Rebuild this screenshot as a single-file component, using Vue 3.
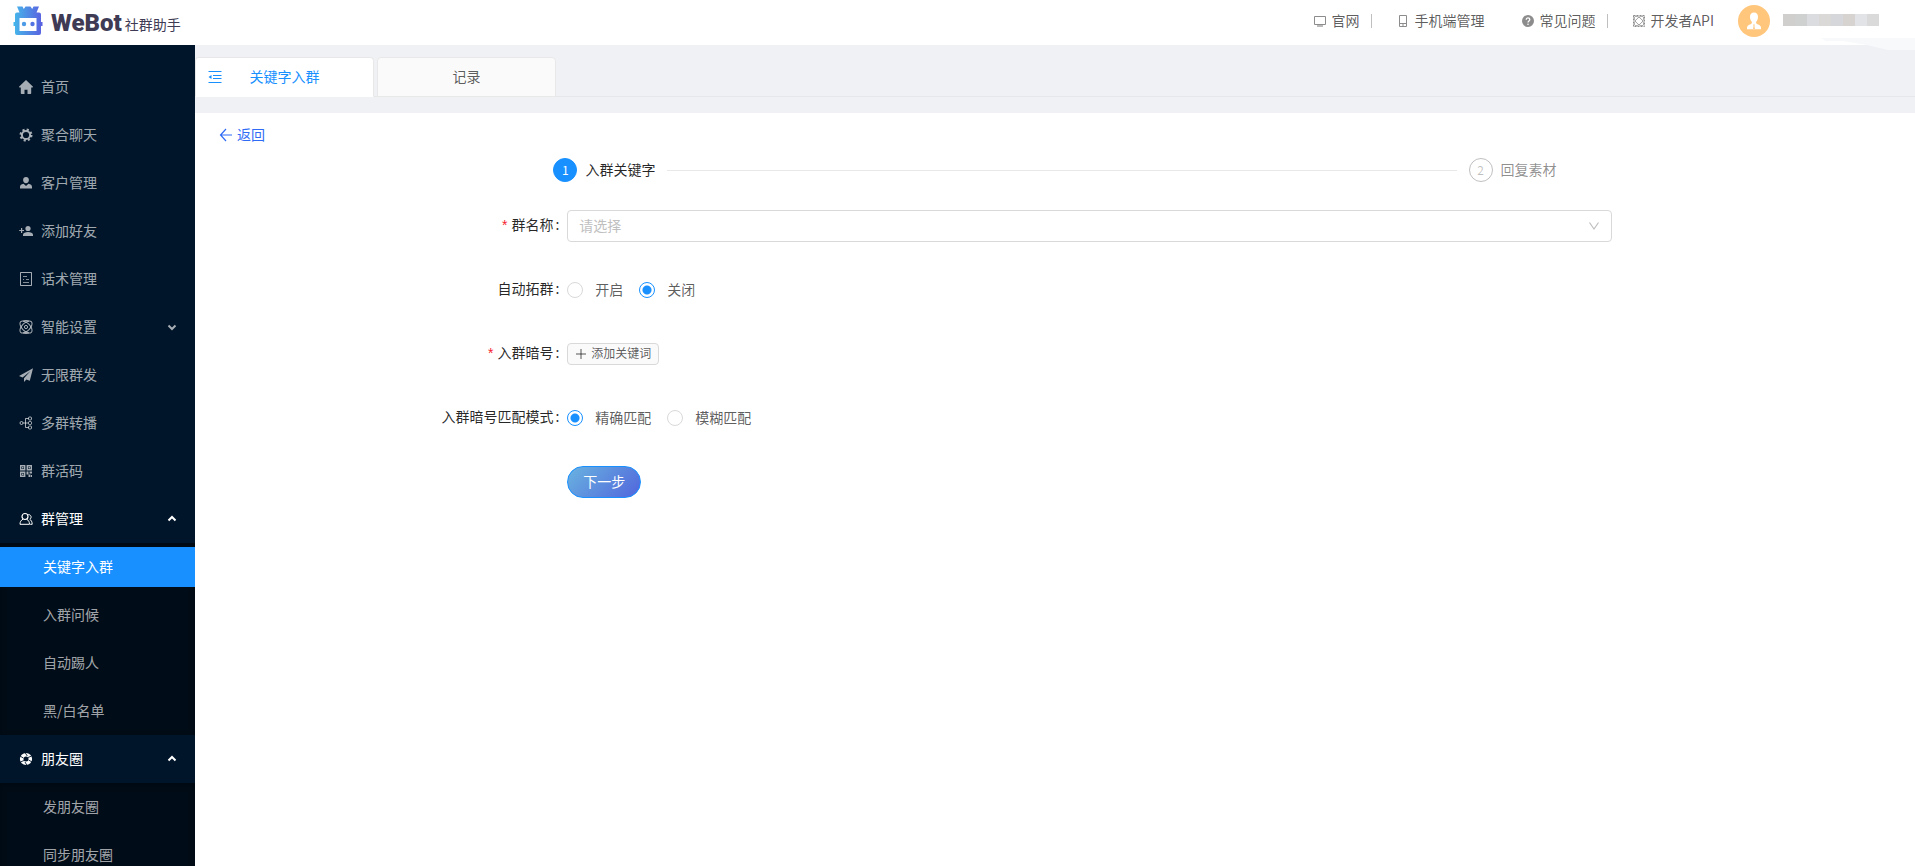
<template>
    <div class="layout">
        <header class="header">
            <a class="logo" href="#">
                <svg class="logo-icon" viewBox="0 0 30 30" aria-hidden="true">
                    <defs>
                        <linearGradient id="bot" x1="0" y1="0" x2="1" y2="0">
                            <stop offset="0" stop-color="#45b8ea" />
                            <stop offset="1" stop-color="#5a5fe0" />
                        </linearGradient>
                    </defs>
                    <path
                        fill="url(#bot)"
                        fill-rule="evenodd"
                        d="M4 .5h5.500l1.300 2.500L12.500.5h5l1.700 2.500L20.500.5H26L23.500 6.500H26a2 2 0 0 1 2 2V16h1.500v4H28v7a2 2 0 0 1-2 2H4a2 2 0 0 1-2-2v-7H.5v-4H2V8.500a2 2 0 0 1 2-2h2.500zM6.500 12v13h17V12z"
                    />
                    <circle cx="11" cy="18" r="2.200" fill="#4d9be6" />
                    <circle cx="19.500" cy="18" r="2.200" fill="#5374e3" />
                </svg>
                <span class="logo-name">WeBot</span>
                <span class="logo-text">社群助手</span>
            </a>
            <nav class="links">
                <a v-for="link in links" :key="link.text" class="link" :class="{ divided: link.divided }" href="#">
                    <svg class="icon-small" viewBox="0 0 12 12" aria-hidden="true" v-html="icons[link.icon]"></svg>
                    <span class="text">{{ link.text }}</span>
                </a>
            </nav>
            <div class="user">
                <svg class="avatar" viewBox="0 0 32 32" aria-hidden="true">
                    <circle cx="16" cy="16" r="16" fill="#ffc67c" />
                    <path
                        fill="#fff"
                        d="M16 7.500c2.600 0 4 1.800 4 4.400 0 2.200-.8 3.800-1.800 4.900-.5 1.300.2 2 1.200 2.400 2 .7 3.600 1.300 3.600 3.600v1.400H9v-1.400c0-2.300 1.600-2.900 3.600-3.600 1-.4 1.700-1.100 1.200-2.400-1-1.100-1.800-2.700-1.800-4.900 0-2.600 1.400-4.400 4-4.400z"
                    />
                    <path fill="#ffc67c" d="M15.200 19.500h1.600l-.4 1.500.5 3h-1.800l.5-3z" />
                </svg>
                <div class="user-name">
                    <i v-for="(color, i) in blocks" :key="i" :style="{ background: color }"></i>
                </div>
            </div>
            <svg class="corner" viewBox="0 0 94 12" aria-hidden="true">
                <path fill="#f8f9fb" d="M0 0h94v12H67L46 7 22 3H5z" />
            </svg>
        </header>

        <div class="body">
            <aside class="sider">
                <ul class="menu">
                    <li v-for="item in menu" :key="item.text">
                        <a class="menu-item" :class="{ open: item.children }" href="#">
                            <svg class="icon" viewBox="0 0 14 14" aria-hidden="true" v-html="icons[item.icon]"></svg>
                            <span class="text">{{ item.text }}</span>
                            <svg
                                v-if="item.children || item.closed"
                                class="arrow"
                                :class="{ up: item.children }"
                                viewBox="0 0 10 10"
                                aria-hidden="true"
                            >
                                <path d="M1.500 3.500 5 7l3.500-3.500" fill="none" stroke="currentColor" stroke-width="2" />
                            </svg>
                        </a>
                        <ul v-if="item.children" class="submenu">
                            <li v-for="child in item.children" :key="child">
                                <a class="submenu-item" :class="{ active: child === current }" href="#">{{ child }}</a>
                            </li>
                        </ul>
                    </li>
                </ul>
            </aside>

            <main class="main">
                <div class="tabs" role="tablist">
                    <button
                        v-for="tab in tabs"
                        :key="tab"
                        class="tab"
                        :class="{ active: tab === activeTab }"
                        type="button"
                        role="tab"
                        :aria-selected="tab === activeTab"
                        @click="activeTab = tab"
                    >
                        <span class="tab-side">
                            <svg v-if="tab === tabs[0]" class="icon" viewBox="0 0 14 14" aria-hidden="true" v-html="icons.fold"></svg>
                        </span>
                        <span class="text">{{ tab }}</span>
                    </button>
                </div>

                <section class="content">
                    <a class="back" href="#">
                        <svg class="icon" viewBox="0 0 14 14" aria-hidden="true" v-html="icons.back"></svg>
                        <span class="text">返回</span>
                    </a>

                    <ol class="steps">
                        <li class="step active"><span class="step-num">1</span><span class="text">入群关键字</span></li>
                        <li class="step-line" role="presentation"></li>
                        <li class="step"><span class="step-num">2</span><span class="text">回复素材</span></li>
                    </ol>

                    <form class="form" @submit.prevent>
                        <div class="row">
                            <label class="label required" for="group">群名称</label>
                            <div class="control">
                                <div class="select">
                                    <select id="group" v-model="group">
                                        <option value="">请选择</option>
                                    </select>
                                    <svg class="select-arrow" viewBox="0 0 12 12" aria-hidden="true">
                                        <path d="M1.500 2.500 6 9l4.500-6.500" fill="none" stroke="currentColor" stroke-width="1.200" />
                                    </svg>
                                </div>
                            </div>
                        </div>
                        <div class="row" role="radiogroup" aria-labelledby="expand">
                            <span id="expand" class="label">自动拓群</span>
                            <div class="control">
                                <label class="radio">
                                    <input v-model="expand" type="radio" name="expand" value="on" />
                                    <span class="text">开启</span>
                                </label>
                                <label class="radio">
                                    <input v-model="expand" type="radio" name="expand" value="off" />
                                    <span class="text">关闭</span>
                                </label>
                            </div>
                        </div>
                        <div class="row">
                            <label class="label required" for="add">入群暗号</label>
                            <div class="control">
                                <button id="add" class="add" type="button">
                                    <svg class="icon-small" viewBox="0 0 12 12" aria-hidden="true">
                                        <path d="M6 1v10M1 6h10" stroke="currentColor" />
                                    </svg>
                                    <span class="text">添加关键词</span>
                                </button>
                            </div>
                        </div>
                        <div class="row" role="radiogroup" aria-labelledby="match">
                            <span id="match" class="label">入群暗号匹配模式</span>
                            <div class="control">
                                <label class="radio">
                                    <input v-model="match" type="radio" name="match" value="exact" />
                                    <span class="text">精确匹配</span>
                                </label>
                                <label class="radio">
                                    <input v-model="match" type="radio" name="match" value="fuzzy" />
                                    <span class="text">模糊匹配</span>
                                </label>
                            </div>
                        </div>
                        <div class="row">
                            <span></span>
                            <div class="control">
                                <button class="next" type="submit">下一步</button>
                            </div>
                        </div>
                    </form>
                </section>
            </main>
        </div>
    </div>
</template>

<script setup>
import { ref } from 'vue'

const current = '关键字入群'
const tabs = ['关键字入群', '记录']
const activeTab = ref('关键字入群')
const group = ref('')
const expand = ref('off')
const match = ref('exact')

const links = [
    { text: '官网', icon: 'screen', divided: true },
    { text: '手机端管理', icon: 'phone' },
    { text: '常见问题', icon: 'help', divided: true },
    { text: '开发者API', icon: 'api' },
]

const blocks = ['#d0cfce', '#cfd1d1', '#dadcdf', '#dad9d7', '#d6d7db', '#d6d3d1', '#e1e3e6', '#dadada']

const menu = [
    { text: '首页', icon: 'home' },
    { text: '聚合聊天', icon: 'gear' },
    { text: '客户管理', icon: 'user' },
    { text: '添加好友', icon: 'addUser' },
    { text: '话术管理', icon: 'doc' },
    { text: '智能设置', icon: 'atom', closed: true },
    { text: '无限群发', icon: 'plane' },
    { text: '多群转播', icon: 'tree' },
    { text: '群活码', icon: 'qr' },
    { text: '群管理', icon: 'group', children: ['关键字入群', '入群问候', '自动踢人', '黑/白名单'] },
    { text: '朋友圈', icon: 'shutter', children: ['发朋友圈', '同步朋友圈'] },
]

const line = 'fill="none" stroke="currentColor"'
const icons = {
    home: '<path d="M7 0 .2 6.600c-.3.4-.1.8.3.8h1.300v5.900c0 .4.3.7.7.7h3V9.800h3V14h3c.4 0 .7-.3.700-.7V7.400h1.300c.4 0 .6-.4.300-.8z" fill="currentColor"/>',
    gear: `<circle cx="7" cy="7" r="4.100" ${line} stroke-width="2"/><circle cx="7" cy="7" r="5.600" ${line} stroke-width="1.800" stroke-dasharray="2.200 2.200"/>`,
    user: '<path d="M7 1c1.800 0 2.900 1.300 2.900 3S8.700 7.300 7 7.300 4.100 5.700 4.100 4 5.200 1 7 1zM4.500 7.800 7 10l2.500-2.200c2.200.4 3.500 1.500 3.500 3.200v1.500H1V11c0-1.700 1.300-2.800 3.500-3.200z" fill="currentColor"/>',
    addUser: '<circle cx="9" cy="4.500" r="2.600" fill="currentColor"/><path d="M4 12v-1.200C4 8.900 6.500 8 9 8s5 .9 5 2.800V12zM2 4h1.200v1.900H5v1.200H3.200V9H2V7.100H.2V5.900H2z" fill="currentColor"/>',
    doc: `<path d="M1.500.5h11v13h-11z" ${line}/><path d="M4 4.500h4M4 7.500h1M7 7.500h3M4 10.500h6" ${line} stroke-opacity=".8"/>`,
    atom: `<ellipse cx="7" cy="7" rx="7.500" ry="4" transform="rotate(45 7 7)" ${line}/><ellipse cx="7" cy="7" rx="7.500" ry="4" transform="rotate(-45 7 7)" ${line}/><circle cx="7" cy="7" r="1.600" ${line}/><path d="M4 1.200Q7-.6 10 1.200M4 12.800q3 1.800 6 0" ${line}/>`,
    plane: '<path d="M14 .3 0 8l3.600 1.400L11.500 3 5 10.200V14l2.400-2.600 3.400 1.400z" fill="currentColor"/>',
    tree: `<circle cx="2.500" cy="7" r="1.500" ${line}/><path d="M4 7h5.500M9.500 2.500h-3v9h3" ${line}/><rect x="9.500" y="1" width="3" height="3" rx="1" ${line}/><rect x="9.500" y="5.500" width="3" height="3" rx="1" ${line}/><rect x="9.500" y="10" width="3" height="3" rx="1" ${line}/>`,
    qr: `<path d="M1.700 1.700h4v4h-4zM8.300 1.700h4v4h-4zM1.700 8.300h4v4h-4z" ${line} stroke-width="1.400"/><path d="M3 3h1.500v1.500H3zM9.500 3H11v1.500H9.500zM3 9.500h1.500V11H3zM7.500 7.500h2v3h-2zM10.500 7.500H13v2h-2.500zM9.500 10.500h2V13h-2zM12 11h1v2h-1z" fill="currentColor"/>`,
    group: `<circle cx="6" cy="4.500" r="3" ${line} stroke-width="1.200"/><path d="M4 7.200C2 8.200 1 9.800 1 12.300h9.500c0-2.500-1-4-2.800-5.100M9.300 2.500c3 .2 3.700 3.300 1.500 4.900 1.500.8 2.300 2.300 2.400 4.900h-2" ${line}/>`,
    shutter: `<circle cx="7" cy="7" r="4.300" ${line} stroke-width="3.600"/><path d="M6 .5 8.300 4M12.600 4 9 5.500M13 10 9.600 8M8 13.500 6 10M1.400 10 5 8.500M1 4l3.400 2" stroke="#001529" stroke-width=".9"/>`,
    fold: `<path d="M.5 1.500h13M5 5.500h8.500M5 8.500h8.500M.5 12.500h13" ${line}/><path d="M3.500 5v4L.5 7z" fill="currentColor"/>`,
    back: `<path d="M13 7H2M7 1 1.500 7 7 13" ${line} stroke-width="1.200"/>`,
    screen: `<path d="M.5 1.500h11v8H.5z" ${line}/><path d="M3 11h6" ${line} stroke-width="1.200"/>`,
    phone: `<path d="M2.500.5h7v11h-7zM2.500 8.500h7M5 10h2" ${line}/>`,
    help: '<circle cx="6" cy="6" r="6" fill="currentColor"/><path d="M4.200 4.800c0-2.600 3.600-2.300 3.600-.2C7.800 6 6 6 6 7.500" fill="none" stroke="#fff" stroke-width="1.300"/><circle cx="6" cy="9.200" r=".8" fill="#fff"/>',
    api: `<path d="M.5.5h11v11H.5z" ${line} stroke-dasharray="2 1"/><ellipse cx="6" cy="6" rx="6" ry="3" transform="rotate(45 6 6)" ${line} stroke-width=".8"/><ellipse cx="6" cy="6" rx="6" ry="3" transform="rotate(-45 6 6)" ${line} stroke-width=".8"/>`,
}
</script>

<style>
body {
    margin: 0;
}
</style>

<style scoped>
.layout {
    display: flex;
    flex-direction: column;
    height: 100vh;
    overflow: hidden;
    color: rgba(0, 0, 0, 0.65);
    font-family: "Noto Sans CJK SC", sans-serif;
    font-size: 14px;
    line-height: 22px;
}

.layout * {
    box-sizing: border-box;
}

a {
    color: inherit;
    text-decoration: none;
}

ul,
ol {
    margin: 0;
    padding: 0;
    list-style: none;
}

button,
select {
    font: inherit;
    cursor: pointer;
}

.icon {
    flex: none;
    width: 14px;
    height: 14px;
}

.icon-small {
    flex: none;
    width: 12px;
    height: 12px;
}

/* centres the glyphs on the icon beside them */
.text {
    padding-bottom: 2px;
}

/* header */
.header {
    position: relative;
    display: flex;
    flex: none;
    align-items: center;
    height: 45px;
    padding: 0 36px 3px 13px;
    background: #fff;
}

.logo {
    display: flex;
    align-items: center;
    margin-right: auto;
    color: #403b54;
}

.logo-icon {
    width: 30px;
    height: 30px;
    margin-right: 8px;
}

.logo-name {
    padding-top: 3px;
    margin-right: 3px;
    font-family: Roboto, sans-serif;
    font-size: 24px;
    font-weight: 900;
}

.logo-text {
    padding-top: 6px;
}

.links {
    display: flex;
    gap: 37px;
    margin-right: 24px;
}

.link {
    position: relative;
    display: flex;
    align-items: center;
    gap: 6px;
}

.link .icon-small {
    color: #8c8c8c;
}

.divided::after {
    content: "";
    position: absolute;
    right: -12px;
    width: 1px;
    height: 14px;
    background: #bfbfbf;
}

.user {
    display: flex;
    align-items: center;
    gap: 13px;
}

.avatar {
    width: 32px;
    height: 32px;
}

.user-name {
    display: flex;
    padding-bottom: 2px;
}

.user-name i {
    width: 12px;
    height: 12px;
}

.corner {
    position: absolute;
    top: 38px;
    right: 0;
    width: 94px;
    height: 12px;
}

/* sidebar */
.body {
    display: flex;
    flex: 1;
    min-height: 0;
}

.sider {
    flex: none;
    width: 195px;
    padding-top: 18px;
    overflow: hidden;
    background: #001529;
}

.menu {
    color: rgba(255, 255, 255, 0.65);
}

.menu-item {
    display: flex;
    align-items: center;
    gap: 8px;
    height: 48px;
    padding: 0 18px 0 19px;
}

.menu-item.open {
    color: #fff;
}

.arrow {
    width: 10px;
    height: 10px;
    margin-left: auto;
}

.arrow.up {
    transform: rotate(180deg);
}

.submenu {
    display: flow-root;
    background: #000c17;
    box-shadow: inset 0 2px 6px rgba(0, 0, 0, 0.3);
}

.submenu li {
    padding: 4px 0;
}

.submenu-item {
    display: block;
    padding: 0 0 2px 43px;
    line-height: 38px;
}

.submenu-item.active {
    color: #fff;
    background: #1890ff;
}

/* main */
.main {
    display: flex;
    flex: 1;
    flex-direction: column;
    min-width: 0;
    padding-top: 12px;
    background: #f0f1f5;
}

.tabs {
    display: flex;
    gap: 3px;
    margin-bottom: 16px;
    box-shadow: inset 0 -1px #e6e7e9;
}

.tab {
    display: grid;
    grid-template-columns: 1fr auto 1fr;
    align-items: center;
    width: 179px;
    height: 40px;
    padding: 0 12px;
    color: inherit;
    background: #fafafa;
    border: 1px solid #e8e8e8;
    border-radius: 4px 4px 0 0;
}

.tab-side {
    display: flex;
}

.tab.active {
    color: #1890ff;
    background: #fff;
    border-bottom-color: #fff;
}

.content {
    flex: 1;
    padding: 10px 24px;
    background: #fff;
}

.back {
    display: flex;
    align-items: center;
    gap: 4px;
    width: fit-content;
    color: #2f6bf5;
}

.steps {
    display: flex;
    align-items: center;
    gap: 12px;
    width: 60%;
    margin: 11px auto 22px;
}

.step {
    display: flex;
    align-items: center;
    gap: 8px;
    color: rgba(0, 0, 0, 0.45);
}

.step.active {
    color: rgba(0, 0, 0, 0.85);
}

.step-num {
    width: 24px;
    height: 24px;
    border: 1px solid rgba(0, 0, 0, 0.25);
    border-radius: 50%;
    color: rgba(0, 0, 0, 0.25);
    font-size: 12px;
    text-align: center;
}

.active .step-num {
    color: #fff;
    background: #1890ff;
    border-color: #1890ff;
}

.step-line {
    flex: 1;
    height: 1px;
    background: #e8e8e8;
}

/* form */
.form {
    display: flex;
    flex-direction: column;
    gap: 24px;
}

.row {
    display: grid;
    grid-template-columns: 5fr 15fr 4fr;
    align-items: center;
    height: 40px;
}

.label {
    padding-right: 8px;
    color: rgba(0, 0, 0, 0.85);
    text-align: right;
}

.label::after {
    content: ":";
    margin-left: 2px;
}

.required::before {
    content: "*";
    margin-right: 4px;
    color: #f5222d;
    font-family: "Liberation Sans", sans-serif;
}

.control {
    display: flex;
    align-items: center;
    padding-top: 4px;
}

.select {
    position: relative;
    flex: 1;
}

.select select {
    display: block;
    width: 100%;
    height: 32px;
    padding: 0 32px 2px 11px;
    color: #bfbfbf;
    background: #fff;
    border: 1px solid #d9d9d9;
    border-radius: 4px;
    appearance: none;
}

.select-arrow {
    position: absolute;
    top: 10px;
    right: 12px;
    width: 12px;
    height: 12px;
    color: #bfbfbf;
    pointer-events: none;
}

.radio {
    display: flex;
    align-items: center;
    gap: 12px;
    margin-right: 16px;
}

.radio input {
    width: 16px;
    height: 16px;
    margin: 0;
    border: 1px solid #d9d9d9;
    border-radius: 50%;
    appearance: none;
}

.radio input:checked {
    background: radial-gradient(circle, #1890ff 4px, #fff 5px);
    border-color: #1890ff;
}

.add {
    display: flex;
    align-items: center;
    gap: 4px;
    height: 22px;
    padding: 0 7px;
    color: inherit;
    background: #fafafa;
    border: 1px solid #d9d9d9;
    border-radius: 4px;
    font-size: 12px;
}

.next {
    height: 32px;
    padding: 0 15px 3px;
    color: #fff;
    background: linear-gradient(135deg, #69b3e0, #5165dc);
    border: 1px solid #1890ff;
    border-radius: 16px;
}
</style>
